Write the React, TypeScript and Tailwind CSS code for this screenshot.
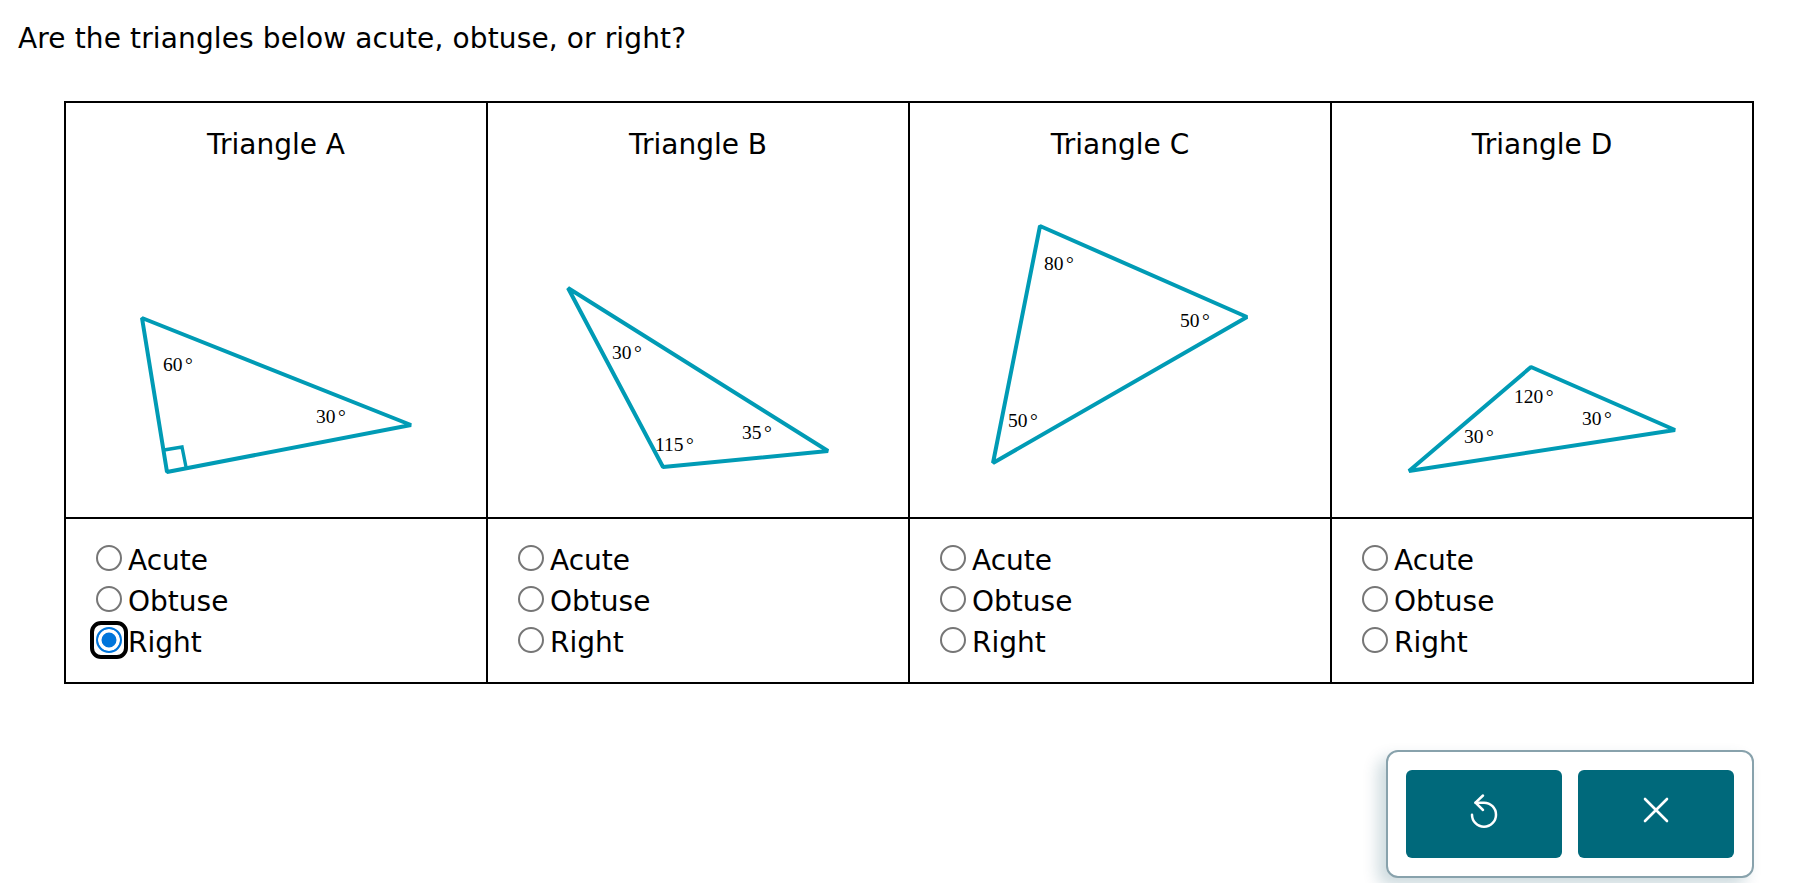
const TEAL = '#009bb5';

type Label = { text: string; x: number; y: number };
type Tri = { name: string; points: string; labels: Label[]; right?: string; checked?: boolean };

// coordinates are relative to the top left of each cell's figure
const triangles: Tri[] = [
  {
    name: 'Triangle A',
    points: '76,72 345,179 101,226',
    right: '98,204 116,201 120,221',
    labels: [
      { text: '60', x: 97, y: 125 },
      { text: '30', x: 250, y: 177 },
    ],
    checked: true,
  },
  {
    name: 'Triangle B',
    points: '80,42 340,205 175,221',
    labels: [
      { text: '30', x: 124, y: 113 },
      { text: '115', x: 167, y: 205 },
      { text: '35', x: 254, y: 193 },
    ],
  },
  {
    name: 'Triangle C',
    points: '130,-20 337,71 83,217',
    labels: [
      { text: '80', x: 134, y: 24 },
      { text: '50', x: 270, y: 81 },
      { text: '50', x: 98, y: 181 },
    ],
  },
  {
    name: 'Triangle D',
    points: '199,121 343,184 77,225',
    labels: [
      { text: '120', x: 182, y: 157 },
      { text: '30', x: 250, y: 179 },
      { text: '30', x: 132, y: 197 },
    ],
  },
];

function Figure({ t }: { t: Tri }) {
  return (
    <svg width="421" height="245" viewBox="0 0 421 245" className="block overflow-visible">
      <polygon points={t.points} fill="none" stroke={TEAL} strokeWidth="4" strokeLinejoin="bevel" />
      {t.right && <polyline points={t.right} fill="none" stroke={TEAL} strokeWidth="3.4" />}
      {t.labels.map((l, i) => (
        <text key={i} x={l.x} y={l.y} fontFamily="'Liberation Serif', serif" fontSize="19.5" fill="#000">
          {l.text}
          <tspan dx="2.5">°</tspan>
        </text>
      ))}
    </svg>
  );
}

function Radio({ label, group, checked }: { label: string; group: string; checked?: boolean }) {
  return (
    <label className="flex items-center h-[41px]">
      <span className="relative w-[26px] h-[26px] mb-[6px] shrink-0">
        <input
          type="radio"
          name={group}
          defaultChecked={checked}
          className="block appearance-none w-[26px] h-[26px] m-0 rounded-full bg-white border-2 border-[#767676] checked:border-[#0075db] checked:bg-[#0075db] checked:shadow-[inset_0_0_0_3.5px_#fff]"
        />
        {checked && <span className="absolute -inset-[6px] rounded-[11px] border-4 border-black" />}
      </span>
      <span className="ml-[6px]">{label}</span>
    </label>
  );
}

export default function App() {
  return (
    <div className="min-h-screen bg-white text-black overflow-hidden text-[28px] font-['DejaVu_Sans',sans-serif]">
      <p className="pt-[21px] pl-[18px] text-[28px] tracking-[0.13px] leading-[36px]">Are the triangles below acute, obtuse, or right?</p>

      <table className="ml-[64px] mt-[44px] w-[1690px] table-fixed border-collapse border-2 border-black">
        <tbody>
          <tr>
            {triangles.map((t) => (
              <td key={t.name} className="border-2 border-black p-0 h-[416px] align-top">
                <div className="text-center pt-[22px] leading-[40px] h-[143px]">{t.name}</div>
                <Figure t={t} />
              </td>
            ))}
          </tr>
          <tr>
            {triangles.map((t) => (
              <td key={t.name} className="border-2 border-black pl-[30px] pt-[21px] pb-[19px] align-top">
                <Radio label="Acute" group={t.name} />
                <Radio label="Obtuse" group={t.name} />
                <Radio label="Right" group={t.name} checked={t.checked} />
              </td>
            ))}
          </tr>
        </tbody>
      </table>

      <div className="flex justify-end mr-[47.5px] mt-[66px]">
        <div className="flex gap-4 p-[18px] rounded-xl bg-white border-2 border-[#88a2ac] shadow-[-8px_8px_16px_rgba(0,70,90,0.2)]">
          <button className="w-[156px] h-[88px] pb-2 rounded-md bg-[#00697b] flex items-center justify-center">
            <svg width="32" height="36" viewBox="0 0 32 36" fill="none" stroke="#fff" strokeWidth="2.5" strokeLinecap="round" strokeLinejoin="round">
              <path d="M15 3.5 7.5 10.7 15 18" />
              <path d="M7.5 10.7H16a12 12 0 1 1-12 12" />
            </svg>
          </button>
          <button className="w-[156px] h-[88px] pb-2 rounded-md bg-[#00697b] flex items-center justify-center">
            <svg width="26" height="26" viewBox="0 0 26 26" fill="none" stroke="#fff" strokeWidth="2.6" strokeLinecap="round">
              <path d="M2 2 24 24M24 2 2 24" />
            </svg>
          </button>
        </div>
      </div>
    </div>
  );
}
